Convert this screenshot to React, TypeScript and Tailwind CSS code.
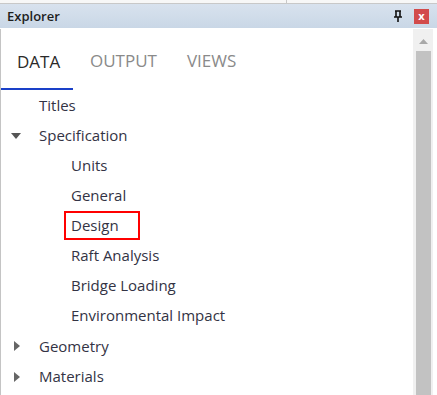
import React from 'react';

const font = { fontFamily: '"Segoe UI", "Open Sans", "Noto Sans", sans-serif' };

type Item = { label: string; level: 0 | 1; arrow?: 'down' | 'right'; boxed?: boolean };

const items: Item[] = [
  { label: 'Titles', level: 0 },
  { label: 'Specification', level: 0, arrow: 'down' },
  { label: 'Units', level: 1 },
  { label: 'General', level: 1 },
  { label: 'Design', level: 1, boxed: true },
  { label: 'Raft Analysis', level: 1 },
  { label: 'Bridge Loading', level: 1 },
  { label: 'Environmental Impact', level: 1 },
  { label: 'Geometry', level: 0, arrow: 'right' },
  { label: 'Materials', level: 0, arrow: 'right' },
];

function Arrow({ dir }: { dir: 'down' | 'right' }) {
  return dir === 'down' ? (
    <svg width="10" height="6" viewBox="0 0 10 6" className="absolute left-[10px] top-[13px]">
      <path d="M0 0h10L5 6z" fill="#555" />
    </svg>
  ) : (
    <svg width="6" height="10" viewBox="0 0 6 10" className="absolute left-[13px] top-[10px]">
      <path d="M0 0v10l6-5z" fill="#666" />
    </svg>
  );
}

export default function App() {
  return (
    <div className="w-[437px] h-[395px] bg-white overflow-hidden flex flex-col" style={font}>
      {/* top strip */}
      <div className="h-[4px] flex border-b border-[#c8c8c8] bg-[#f7f7f7]">
        <div className="w-[287px] border-r border-[#c8c8c8]" />
      </div>

      {/* title bar */}
      <div className="h-[24px] flex items-center bg-gradient-to-b from-[#d8e2ee] to-[#c9d7e6] pl-[7px] pr-[8px]">
        <span className="text-[13px] font-semibold text-[#1e1e1e] leading-none">Explorer</span>
        <div className="ml-auto flex items-center gap-[11px]">
          <svg width="10" height="12" viewBox="0 0 10 12">
            <path d="M2 1h6M3 1v6M7 1v6M1 7h8M5 7v5" stroke="#111" strokeWidth="1.6" fill="none" />
          </svg>
          <div className="w-[15px] h-[15px] bg-[#d24b4b] flex items-center justify-center">
            <span className="text-white text-[11px] font-bold leading-none pb-[1px]">x</span>
          </div>
        </div>
      </div>

      {/* content */}
      <div className="flex flex-1 min-h-0 border-l border-[#c4c4c4] mt-[1px]">
        <div className="flex-1 flex flex-col">
          <div className="flex items-end h-[61px]">
            <div className="w-[72px] h-[61px] flex flex-col">
              <div className="flex-1 flex items-center pl-[16px] pt-[6px] text-[17px] text-[#2a2a2a]">DATA</div>
              <div className="h-[2px] bg-[#1a40c8]" />
            </div>
            <div className="h-[61px] flex items-center pl-[17px] pt-[4px] pb-[2px] text-[17px] text-[#8a8a8a]">OUTPUT</div>
            <div className="h-[61px] flex items-center pl-[30px] pt-[4px] pb-[2px] text-[17px] text-[#8a8a8a]">VIEWS</div>
          </div>
          <div className="flex flex-col">
            {items.map((it, i) => (
              <div key={it.label} className={`relative flex items-center ${i < 5 ? 'h-[30px]' : 'h-[30.4px]'}`}>
                {it.arrow && <Arrow dir={it.arrow} />}
                <span
                  className={`text-[15px] text-[#333344] leading-none ${
                    it.level === 0 ? 'ml-[38px]' : 'ml-[70px]'
                  } ${it.boxed ? 'outline-[2.5px] outline-[#ff0000] outline-offset-[5px] pr-[14px]' : ''}`}
                >
                  {it.label}
                </span>
              </div>
            ))}
          </div>
        </div>

        {/* scrollbar */}
        <div className="w-[20px] mr-[4px] bg-[#f0f0f0] flex flex-col items-center pt-[10px]">
          <svg width="9" height="5" viewBox="0 0 9 5">
            <path d="M0 5L4.5 0L9 5z" fill="#a8a8a8" />
          </svg>
          <div className="mt-[7px] w-[15px] flex-1 bg-[#c2c2c2]" />
        </div>
      </div>
    </div>
  );
}
